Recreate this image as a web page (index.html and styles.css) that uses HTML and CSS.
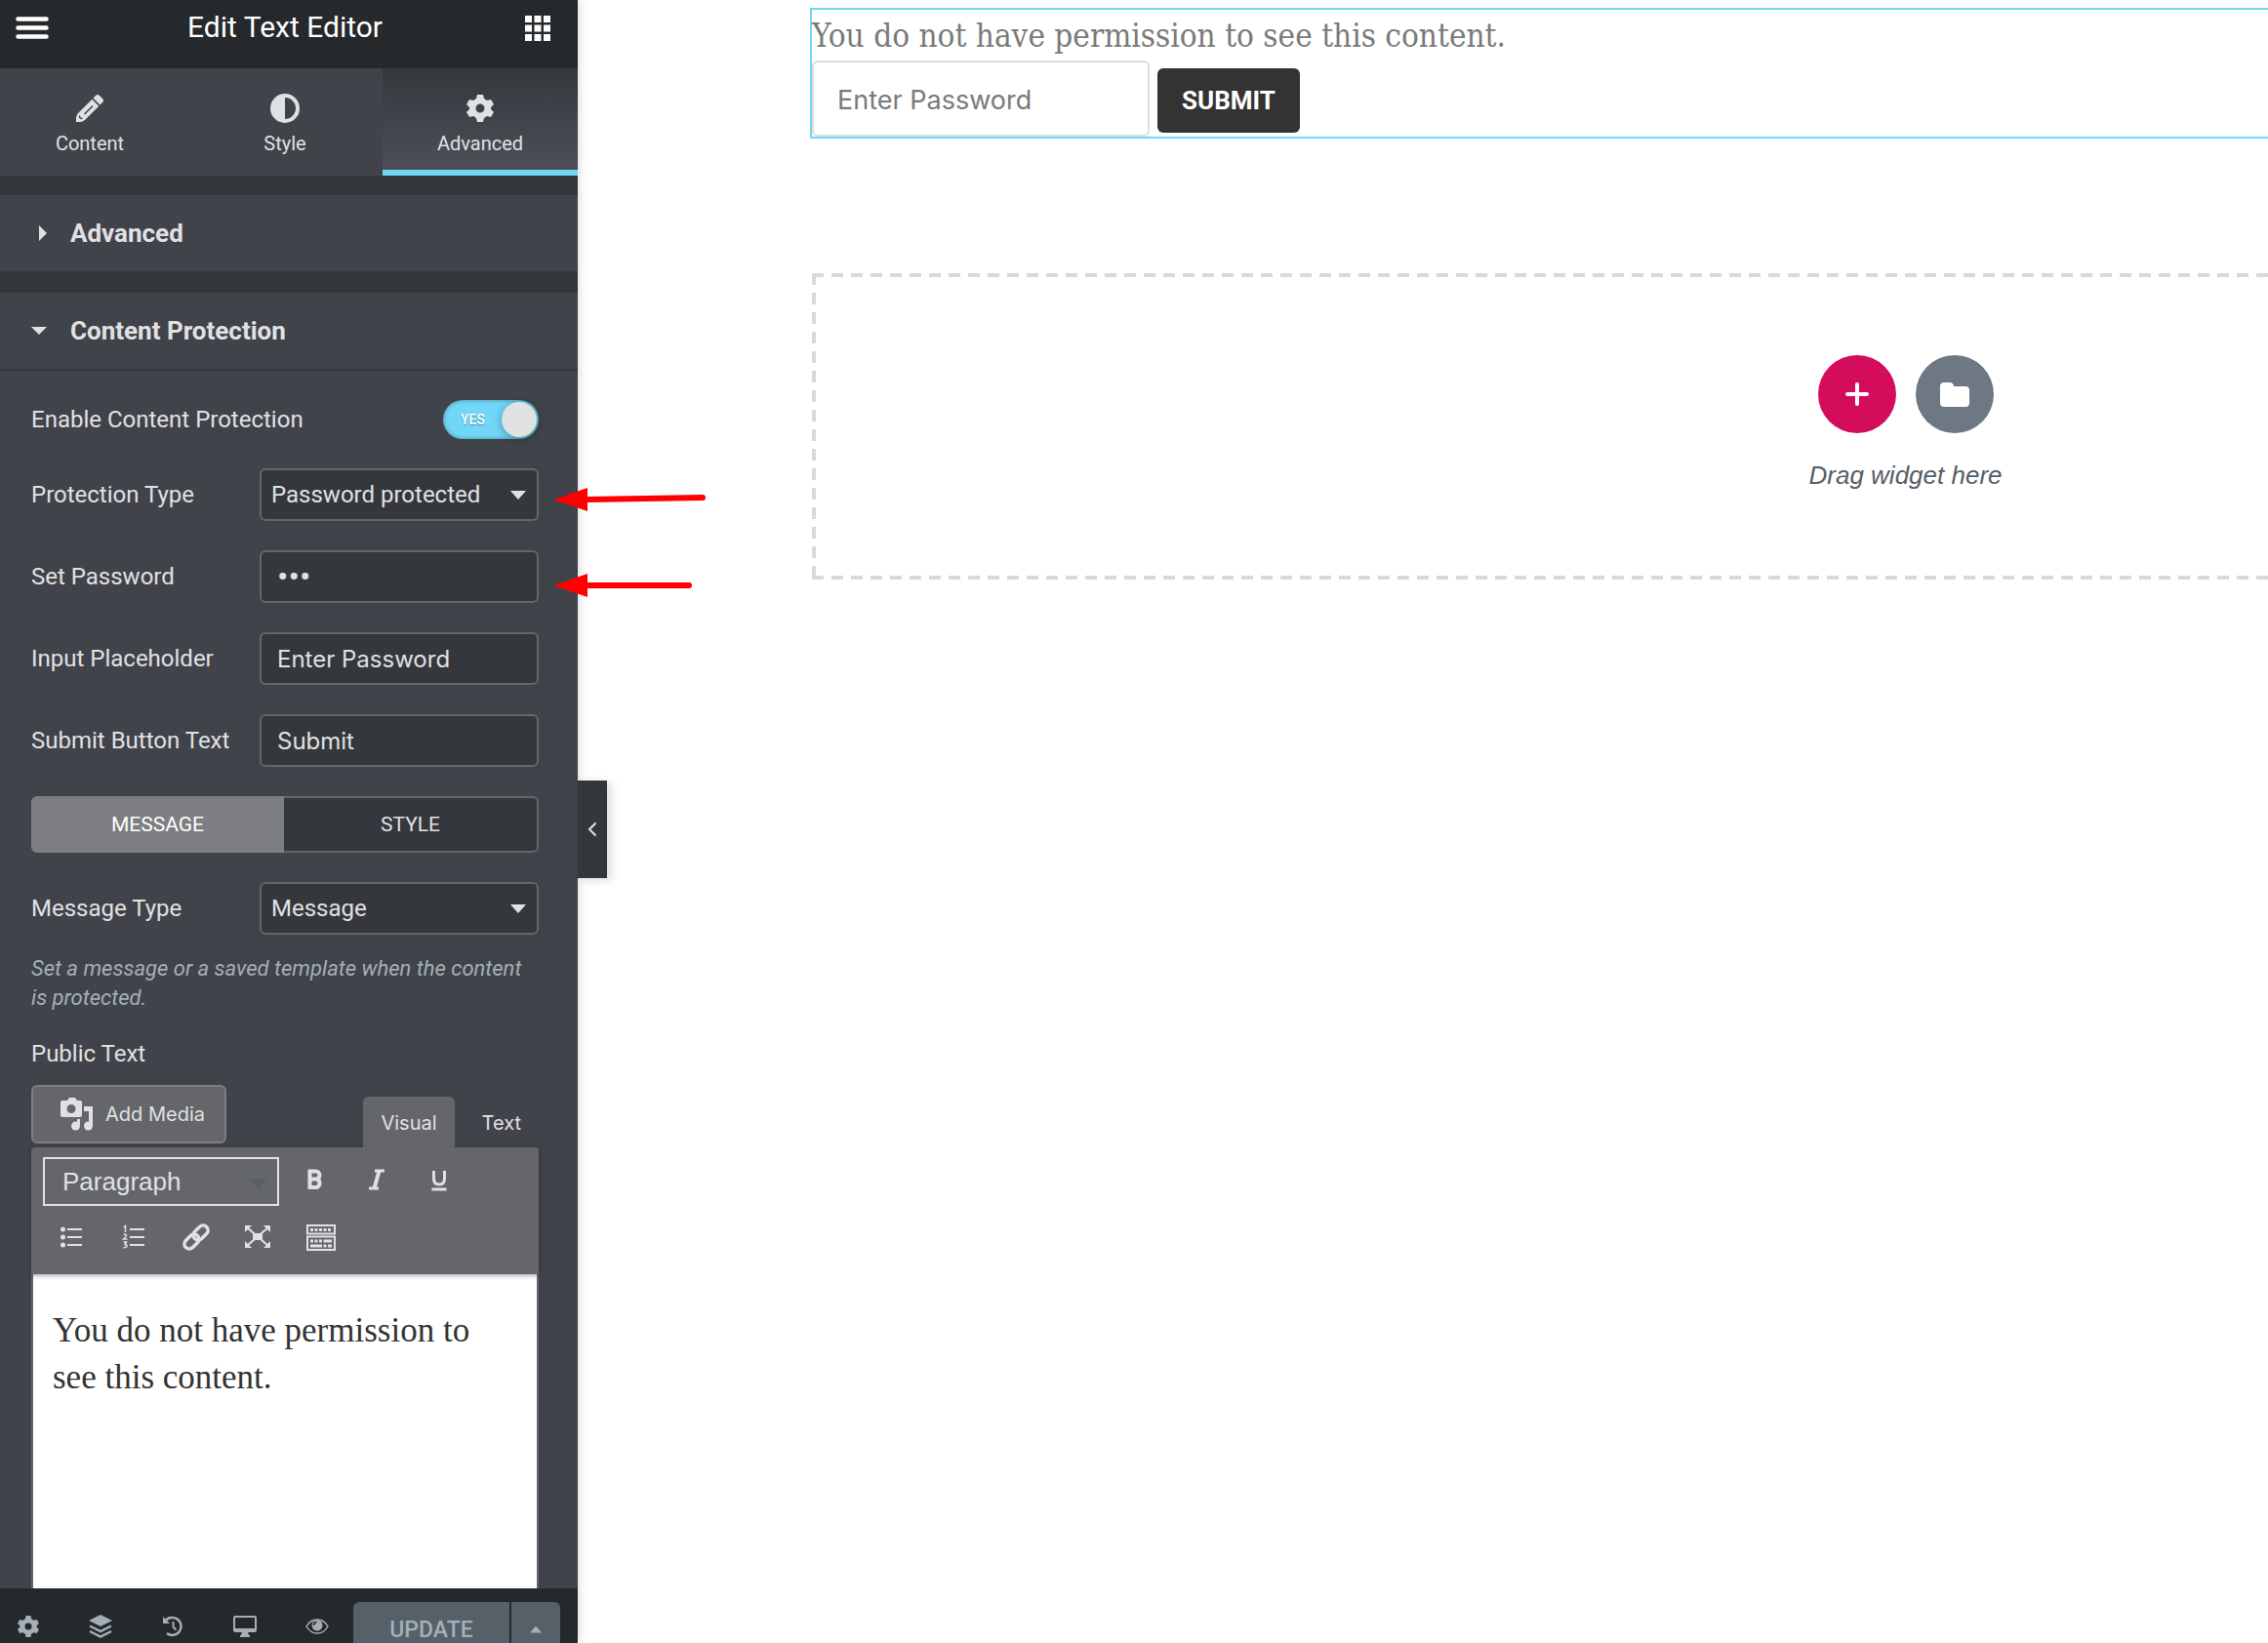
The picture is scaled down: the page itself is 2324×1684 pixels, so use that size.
FILE: index.html
```
<!DOCTYPE html>
<html lang="en">
<head>
    <meta charset="UTF-8">
    <meta name="viewport" content="width=device-width, initial-scale=1.0">
    <title>Edit Text Editor</title>
    <link rel="stylesheet" href="styles.css">
</head>
<body>
    <svg class="sprite" aria-hidden="true">
        <symbol id="gear" viewBox="0 0 28 28">
            <path fill-rule="evenodd" d="M11 0h6l1 4 3 2 4-1 3 5-3 3v2l3 3-3 5-4-1-3 2-1 4h-6l-1-4-3-2-4 1-3-5 3-3v-2L0 10l3-5 4 1 3-2zM14 9.500a4.500 4.500 0 1 0 0 9 4.500 4.500 0 0 0 0-9z"/>
        </symbol>
    </svg>

    <aside class="panel">
        <header class="panel-header">
            <button class="icon-btn" aria-label="Menu">
                <svg width="34" height="24" viewBox="0 0 34 24"><path d="M2.500 2.500h29M2.500 11.500h29M2.500 20.500h29" stroke="#fff" stroke-width="4.500" stroke-linecap="round"/></svg>
            </button>
            <h1>Edit Text Editor</h1>
            <button class="icon-btn" aria-label="Widgets">
                <svg width="26" height="26" viewBox="0 0 26 26" fill="#fff"><path d="M0 0h7v7H0zM9.500 0h7v7h-7zM19 0h7v7h-7zM0 9.500h7v7H0zM9.500 9.500h7v7h-7zM19 9.500h7v7h-7zM0 19h7v7H0zM9.500 19h7v7h-7zM19 19h7v7h-7z"/></svg>
            </button>
        </header>

        <nav class="tabs">
            <button class="tab">
                <svg width="30" height="30" viewBox="0 0 30 30"><path fill="currentColor" d="M21 2q2-2 4 0l3 3q2 2 0 4l-2.500 2.500-7-7zM17.300 5.700l7 7L10 27l-3.500 2H1v-5l1.500-3.500z"/><path d="M18 12.500L9.500 21M4.500 22.500q-.500 3 3 3" fill="none" stroke="#404349" stroke-width="1.500"/></svg>
                Content
            </button>
            <button class="tab">
                <svg width="30" height="30" viewBox="0 0 30 30"><circle cx="15" cy="15" r="13" fill="none" stroke="currentColor" stroke-width="4"/><path fill="currentColor" d="M15 2a13 13 0 0 0 0 26z"/></svg>
                Style
            </button>
            <button class="tab active">
                <svg width="30" height="30" fill="currentColor"><use href="#gear" x="1" y="1" width="28" height="28"/></svg>
                Advanced
            </button>
        </nav>

        <button class="section-title"><span class="caret-right"></span>Advanced</button>
        <button class="section-title open"><span class="caret-down"></span>Content Protection</button>

        <div class="controls">
            <div class="control">
                <label for="enable">Enable Content Protection</label>
                <span class="switch">
                    <input type="checkbox" id="enable" checked>
                    <span class="switch-text">YES</span>
                </span>
            </div>
            <div class="control">
                <label for="type">Protection Type</label>
                <span class="select">
                    <select id="type"><option>Password protected</option></select>
                </span>
                <svg class="arrow" width="160" height="26" viewBox="0 0 160 26"><path d="M34 14L153 12" stroke="#f00" stroke-width="6" stroke-linecap="round"/><path d="M0 14L35 2v24z" fill="#f00"/></svg>
            </div>
            <div class="control">
                <label for="password">Set Password</label>
                <input type="password" id="password" value="123">
                <svg class="arrow" width="160" height="26" viewBox="0 0 160 26"><path d="M34 18L139 18" stroke="#f00" stroke-width="6" stroke-linecap="round"/><path d="M0 18L35 6v24z" fill="#f00"/></svg>
            </div>
            <div class="control">
                <label for="placeholder">Input Placeholder</label>
                <input type="text" id="placeholder" value="Enter Password">
            </div>
            <div class="control">
                <label for="submit-text">Submit Button Text</label>
                <input type="text" id="submit-text" value="Submit">
            </div>
            <div class="toggle">
                <button class="active">MESSAGE</button>
                <button>STYLE</button>
            </div>
            <div class="control">
                <label for="message-type">Message Type</label>
                <span class="select">
                    <select id="message-type"><option>Message</option></select>
                </span>
            </div>
        </div>
        <p class="description">Set a message or a saved template when the content is protected.</p>

        <div class="editor">
            <h2>Public Text</h2>
            <div class="editor-top">
                <button class="add-media">
                    <svg width="34" height="34" viewBox="0 0 34 34" fill="currentColor"><path fill-rule="evenodd" d="M7 3l2-3h6l2 3h3q2 0 2 2v13q0 2-2 2H2q-2 0-2-2V5q0-2 2-2zM11 7a4.500 4.500 0 1 0 0 9 4.500 4.500 0 0 0 0-9z"/><path d="M24 9h9v20h-4V14h-5zM17 22h3v7h-3z"/><circle cx="15.500" cy="29" r="4.500"/><circle cx="28.500" cy="29" r="4.500"/></svg>
                    Add Media
                </button>
                <div class="editor-tabs">
                    <button class="active">Visual</button>
                    <button>Text</button>
                </div>
            </div>
            <div class="toolbar">
                <div class="toolbar-row">
                    <span class="format">
                        <select aria-label="Format"><option>Paragraph</option></select>
                    </span>
                    <button aria-label="Bold"><svg width="30" height="30" viewBox="0 0 30 30"><path d="M10.500 6.500h6a4 4 0 0 1 0 8h-6zM10.500 14.500h7a4.500 4.500 0 0 1 0 8.500h-7z" fill="none" stroke="currentColor" stroke-width="4"/></svg></button>
                    <button aria-label="Italic"><svg width="30" height="30" viewBox="0 0 30 30"><path d="M13 6h10M7 24h10" stroke="currentColor" stroke-width="3"/><path d="M17.500 6L12.500 24" stroke="currentColor" stroke-width="4"/></svg></button>
                    <button aria-label="Underline"><svg width="30" height="30" viewBox="0 0 30 30"><path d="M9.500 6v8q0 6 5.500 6t5.500-6V6" fill="none" stroke="currentColor" stroke-width="3"/><path d="M7.500 25h15" stroke="currentColor" stroke-width="3"/></svg></button>
                </div>
                <div class="toolbar-row">
                    <button aria-label="Bulleted list"><svg width="30" height="30" viewBox="0 0 30 30"><path d="M11 7h15M11 15h15M11 23h15" stroke="currentColor" stroke-width="2"/><g fill="currentColor"><circle cx="6.500" cy="7" r="2.500"/><circle cx="6.500" cy="15" r="2.500"/><circle cx="6.500" cy="23" r="2.500"/></g></svg></button>
                    <button aria-label="Numbered list"><svg width="30" height="30" viewBox="0 0 30 30"><path d="M11 7h15M11 15h15M11 23h15" stroke="currentColor" stroke-width="2"/><path d="M4.500 5L6.500 3.500V10M4.500 12.500q3-1 3 .5 0 1.500-3 4h4M4.500 20h3l-1.500 2.500q2 0 2 1.500t-3.500 2" fill="none" stroke="currentColor" stroke-width="1.500"/></svg></button>
                    <button aria-label="Link"><svg width="30" height="30" viewBox="0 0 30 30"><g transform="rotate(-45 15 15)" fill="none" stroke="currentColor" stroke-width="3.500"><rect x="0" y="10" width="17" height="10" rx="5"/><rect x="13" y="10" width="17" height="10" rx="5"/></g></svg></button>
                    <button aria-label="Fullscreen"><svg width="30" height="30" viewBox="0 0 30 30"><path fill="currentColor" d="M1 3h7L1 10zM27 3h-7l7 7zM1 26h7l-7-7zM27 26h-7l7-7zM9 11h10v7H9z"/><path d="M3 5l22 19M25 5L3 24" stroke="currentColor" stroke-width="2"/></svg></button>
                    <button aria-label="Toolbar toggle"><svg width="30" height="30" viewBox="0 0 30 30"><path d="M1 3h28v8.500H1zM1 14.500h28V28H1z" fill="none" stroke="currentColor" stroke-width="2"/><path fill="currentColor" d="M4 6h3v3H4zM8.500 6h3v3h-3zM13 6h3v3h-3zM17.500 6h3v3h-3zM22 6h3v3h-3zM4 17.500h3v3H4zM8.500 17.500h3v3h-3zM13 17.500h3v3h-3zM17.500 17.500h8.500v3h-8.500zM4 22.500h12v3H4zM17.500 22.500h3v3h-3zM22 22.500h4v3h-4z"/></svg></button>
                </div>
            </div>
            <div class="editor-body" contenteditable="true">You do not have permission to see this content.</div>
        </div>

        <footer class="panel-footer">
            <button class="tool" aria-label="Settings"><svg width="24" height="24" fill="currentColor"><use href="#gear" x="1" y="1" width="22" height="22"/></svg></button>
            <button class="tool" aria-label="Navigator"><svg width="24" height="24" viewBox="0 0 24 24"><path d="M12 0l12 6-12 6L0 6z" fill="currentColor"/><path d="M1 11.500l11 5.500 11-5.500M1 17l11 5.500L23 17" fill="none" stroke="currentColor" stroke-width="2.500"/></svg></button>
            <button class="tool" aria-label="History"><svg width="24" height="24" viewBox="0 0 24 24"><path d="M4 7a9 9 0 1 1 2 12" fill="none" stroke="currentColor" stroke-width="2.500"/><path d="M2 2v7h7z" fill="currentColor"/><path d="M12.500 7v5.500l3 3" fill="none" stroke="currentColor" stroke-width="2"/></svg></button>
            <button class="tool" aria-label="Responsive mode"><svg width="24" height="24" viewBox="0 0 24 24"><path fill="currentColor" fill-rule="evenodd" d="M2 1h20q2 0 2 2v13q0 2-2 2h-7l1 3h1v2H7v-2h1l1-3H2q-2 0-2-2V3q0-2 2-2zM2 3v11h20V3z"/></svg></button>
            <button class="tool" aria-label="Preview"><svg width="24" height="24" viewBox="0 0 24 24"><path d="M1 12q4-7 11-7t11 7q-4 7-11 7T1 12z" fill="none" stroke="currentColor" stroke-width="1.500"/><circle cx="12" cy="11" r="5.500" fill="currentColor"/><path d="M8.500 11q0-3 3-3.500" fill="none" stroke="#26292c" stroke-width="1.500"/></svg></button>
            <button class="update">UPDATE</button>
            <button class="update-more" aria-label="Save options"><span class="caret-up"></span></button>
        </footer>

        <button class="collapse" aria-label="Hide panel">
            <svg width="10" height="16" viewBox="0 0 10 16"><path d="M8.500 1.500L2 8l6.500 6.500" fill="none" stroke="#e0e1e3" stroke-width="2"/></svg>
        </button>
    </aside>

    <main class="preview">
        <form class="widget">
            <p>You do not have permission to see this content.</p>
            <div class="widget-form">
                <input type="password" placeholder="Enter Password" aria-label="Password">
                <button type="button">SUBMIT</button>
            </div>
        </form>

        <div class="drop-area">
            <div class="drop-buttons">
                <button class="add" aria-label="Add section"><svg width="24" height="24" viewBox="0 0 24 24"><path d="M12 2v20M2 12h20" stroke="#fff" stroke-width="4" stroke-linecap="round"/></svg></button>
                <button class="folder" aria-label="Add template"><svg width="30" height="28" viewBox="0 0 30 28"><path d="M4 2h7q3 1 3 4h12q4 0 4 4v13q0 4-4 4H4q-4 0-4-4V6q0-4 4-4z" fill="#fff"/></svg></button>
            </div>
            <p>Drag widget here</p>
        </div>
    </main>
</body>
</html>
```
FILE: styles.css
```
* {
    box-sizing: border-box;
}

body {
    display: flex;
    height: 100vh;
    margin: 0;
    overflow: hidden;
    background: #fff;
    font-family: Roboto, sans-serif;
}

button,
input,
select {
    margin: 0;
    padding: 0;
    border: 0;
    background: none;
    color: inherit;
    font: inherit;
}

select {
    appearance: none;
}

h1,
h2,
p {
    margin: 0;
}

svg {
    display: block;
}

.sprite {
    position: absolute;
    width: 0;
    height: 0;
}

/* Panel */
.panel {
    position: relative;
    z-index: 1;
    display: flex;
    flex-direction: column;
    flex: 0 0 600px;
    margin-left: -8px;
    background: #404349;
    color: #e0e1e3;
    font-size: 24px;
    box-shadow: 0 0 10px rgba(0, 0, 0, 0.2);
}

.panel-header {
    display: flex;
    justify-content: space-between;
    flex: 0 0 70px;
    padding: 0 24px 12px;
    background: #26292c;
    color: #fff;
}

.panel-header h1 {
    font-size: 30px;
    font-weight: 400;
    line-height: 56px;
}

.icon-btn {
    display: flex;
    align-items: center;
    justify-content: center;
    width: 34px;
}

.tabs {
    display: grid;
    grid-template-columns: repeat(3, 1fr);
    flex: 0 0 110px;
}

.tab {
    display: flex;
    flex-direction: column;
    align-items: center;
    gap: 9px;
    padding-top: 26px;
    font-size: 20px;
    line-height: 24px;
}

.tab.active {
    border-bottom: 6px solid #71d7f7;
    background: linear-gradient(#34383c, #4d4f58);
}

.section-title {
    display: flex;
    align-items: center;
    flex: 0 0 98px;
    padding-left: 48px;
    border-top: 20px solid #34383c;
    font-size: 26px;
    font-weight: 700;
}

.section-title.open {
    padding-left: 40px;
    flex-basis: 102px;
    border-top-width: 22px;
    border-bottom: 2px solid #34383c;
}

.caret-right {
    width: 8px;
    height: 16px;
    margin-right: 24px;
    background: #e0e1e3;
    clip-path: polygon(0 0, 100% 50%, 0 100%);
}

.caret-down {
    width: 16px;
    height: 8px;
    margin-right: 24px;
    background: #e0e1e3;
    clip-path: polygon(0 0, 100% 0, 50% 100%);
}

.controls {
    display: flex;
    flex-direction: column;
    gap: 30px;
    padding: 30px 40px 20px;
}

.control {
    position: relative;
    display: flex;
    align-items: center;
    justify-content: space-between;
}

.control input[type="text"],
.control input[type="password"],
.control select {
    width: 286px;
    height: 54px;
    border: 2px solid #64666a;
    border-radius: 6px;
    background: #34383c;
}

.control input[type="text"],
.control input[type="password"] {
    padding: 0 16px;
    font-family: Inter, sans-serif;
    font-size: 24px;
}

.control input[type="password"] {
    font-family: Roboto, sans-serif;
    font-size: 34px;
}

.control select {
    padding: 0 10px;
}

.select,
.format {
    position: relative;
}

.select::after {
    content: "";
    position: absolute;
    top: 23px;
    right: 13px;
    width: 16px;
    height: 9px;
    background: #e0e1e3;
    clip-path: polygon(0 0, 100% 0, 50% 100%);
    pointer-events: none;
}

.arrow {
    position: absolute;
    top: 18px;
    left: 535px;
    overflow: visible;
}

.switch {
    position: relative;
    display: flex;
    align-items: center;
    width: 98px;
    height: 40px;
}

.switch input {
    position: absolute;
    inset: 0;
    appearance: none;
    border-radius: 20px;
    background: #71d7f7;
    box-shadow: inset 0 0 4px rgba(0, 0, 0, 0.4);
}

.switch input::after {
    content: "";
    position: absolute;
    top: 2px;
    right: 2px;
    width: 36px;
    height: 36px;
    border-radius: 50%;
    background: #e0e1e3;
    box-shadow: 0 2px 10px rgba(0, 0, 0, 0.3);
}

.switch-text {
    position: relative;
    padding-left: 18px;
    color: #fff;
    font-size: 14px;
    font-weight: 500;
    text-shadow: 0 1px 1px rgba(0, 0, 0, 0.4);
    pointer-events: none;
}

.toggle {
    display: flex;
    height: 58px;
    font-size: 21px;
}

.toggle button {
    flex: 1;
    border: 2px solid #64666a;
    border-left: 0;
    border-radius: 0 6px 6px 0;
    background: #34383c;
}

.toggle .active {
    border: 0;
    border-radius: 6px 0 0 6px;
    background: #7d7e82;
    color: #fff;
}

.description {
    padding: 0 40px;
    color: #a4afb7;
    font-size: 22px;
    font-style: italic;
    line-height: 30px;
}

/* Editor */
.editor {
    display: flex;
    flex-direction: column;
    flex: 1;
    min-height: 0;
    padding: 30px 40px 0;
}

.editor h2 {
    font-size: 24px;
    font-weight: 400;
    line-height: 24px;
}

.editor-top {
    display: flex;
    align-items: flex-start;
    justify-content: space-between;
    height: 64px;
    margin-top: 20px;
    font-family: Inter, sans-serif;
    font-size: 20px;
}

.add-media {
    display: flex;
    align-items: center;
    gap: 12px;
    width: 200px;
    height: 60px;
    padding-left: 28px;
    border: 2px solid #7d7e82;
    border-radius: 6px;
    background: #64666a;
    white-space: nowrap;
}

.editor-tabs {
    display: flex;
    gap: 10px;
    margin-top: 12px;
}

.editor-tabs button {
    height: 52px;
    padding: 2px 18px 0;
    border-radius: 6px 6px 0 0;
}

.editor-tabs .active {
    background: #64666a;
}

.toolbar {
    position: relative;
    display: flex;
    flex-direction: column;
    gap: 14px;
    flex: 0 0 130px;
    padding: 10px 12px;
    border-radius: 4px 4px 0 0;
    background: #64666a;
    box-shadow: 0 2px 4px rgba(0, 0, 0, 0.3);
}

.toolbar-row {
    display: flex;
    align-items: center;
    gap: 34px;
    padding-left: 14px;
}

.toolbar-row:first-child {
    height: 50px;
    padding-left: 0;
}

.toolbar-row:first-child button {
    margin-top: -4px;
}

.toolbar-row:last-child {
    height: 36px;
}

.format {
    margin-right: -13px;
}

.format select {
    width: 242px;
    height: 50px;
    padding: 0 18px;
    border: 2px solid #e0e1e3;
    font-family: "Liberation Sans", sans-serif;
    font-size: 26px;
}

.format::after {
    content: "";
    position: absolute;
    top: 22px;
    right: 13px;
    width: 16px;
    height: 12px;
    background: #556068;
    clip-path: polygon(0 0, 100% 0, 50% 100%);
    pointer-events: none;
}

.editor-body {
    flex: 1;
    padding: 34px 20px;
    border: solid #64666a;
    border-width: 0 2px;
    background: #fff;
    color: #333;
    font-family: Georgia, "Liberation Serif", serif;
    font-size: 35px;
    line-height: 48px;
}

/* Footer */
.panel-footer {
    display: flex;
    flex: 0 0 56px;
    overflow: hidden;
    background: #26292c;
    color: #a4afb7;
}

.tool {
    display: flex;
    align-items: center;
    justify-content: center;
    flex: 0 0 74px;
    height: 78px;
}

.update,
.update-more {
    height: 56px;
    margin-top: 14px;
    background: #556068;
}

.update {
    width: 160px;
    border-radius: 6px 0 0 0;
    font-size: 23px;
    font-weight: 500;
}

.update-more {
    width: 50px;
    margin-left: 2px;
    border-radius: 0 6px 0 0;
}

.caret-up {
    display: block;
    width: 12px;
    height: 7px;
    margin: 0 auto;
    background: #a4afb7;
    clip-path: polygon(50% 0, 100% 100%, 0 100%);
}

.collapse {
    position: absolute;
    top: 800px;
    left: 100%;
    display: flex;
    align-items: center;
    justify-content: center;
    width: 30px;
    height: 100px;
    background: #34383c;
    box-shadow: 4px 2px 10px rgba(0, 0, 0, 0.15);
}

/* Preview */
.preview {
    flex: 1;
    min-width: 0;
    padding: 8px 0 0 238px;
    overflow: hidden;
}

.widget {
    width: 150%;
    height: 134px;
    border: 2px solid #71d7f7;
}

.widget p {
    padding-top: 2px;
    color: #7a7a7a;
    font-family: "Roboto Slab", "DejaVu Serif Condensed", "DejaVu Serif", serif;
    font-size: 33px;
    line-height: 50px;
}

.widget-form {
    display: flex;
    align-items: flex-end;
    gap: 8px;
    font-family: Inter, sans-serif;
}

.widget-form input {
    width: 346px;
    height: 78px;
    padding: 2px 24px 0;
    border: 2px solid #ddd;
    border-radius: 6px;
    font-size: 27px;
}

.widget-form input::placeholder {
    color: #7a7a7a;
}

.widget-form button {
    width: 146px;
    height: 66px;
    margin-bottom: 4px;
    border-radius: 6px;
    background: #333;
    color: #fff;
    font-family: Roboto, sans-serif;
    font-size: 26px;
    font-weight: 700;
}

.drop-area {
    display: flex;
    flex-direction: column;
    align-items: center;
    gap: 25px;
    width: 150%;
    height: 314px;
    margin: 138px 0 0 2px;
    padding-top: 84px;
    background:
        repeating-linear-gradient(to right, #d5dadf 0 12px, transparent 12px 20px) top / 100% 4px no-repeat,
        repeating-linear-gradient(to right, #d5dadf 0 12px, transparent 12px 20px) bottom / 100% 4px no-repeat,
        repeating-linear-gradient(to bottom, #d5dadf 0 12px, transparent 12px 20px) left / 4px 100% no-repeat;
}

.drop-buttons {
    display: flex;
    gap: 20px;
}

.drop-buttons button {
    display: flex;
    align-items: center;
    justify-content: center;
    width: 80px;
    height: 80px;
    border-radius: 50%;
}

.drop-buttons .add {
    background: #d30c5c;
}

.drop-buttons .folder {
    background: #6d7882;
}

.drop-area p {
    color: #556068;
    font-family: "Liberation Sans", sans-serif;
    font-size: 26px;
    font-style: italic;
    line-height: 36px;
}
```
